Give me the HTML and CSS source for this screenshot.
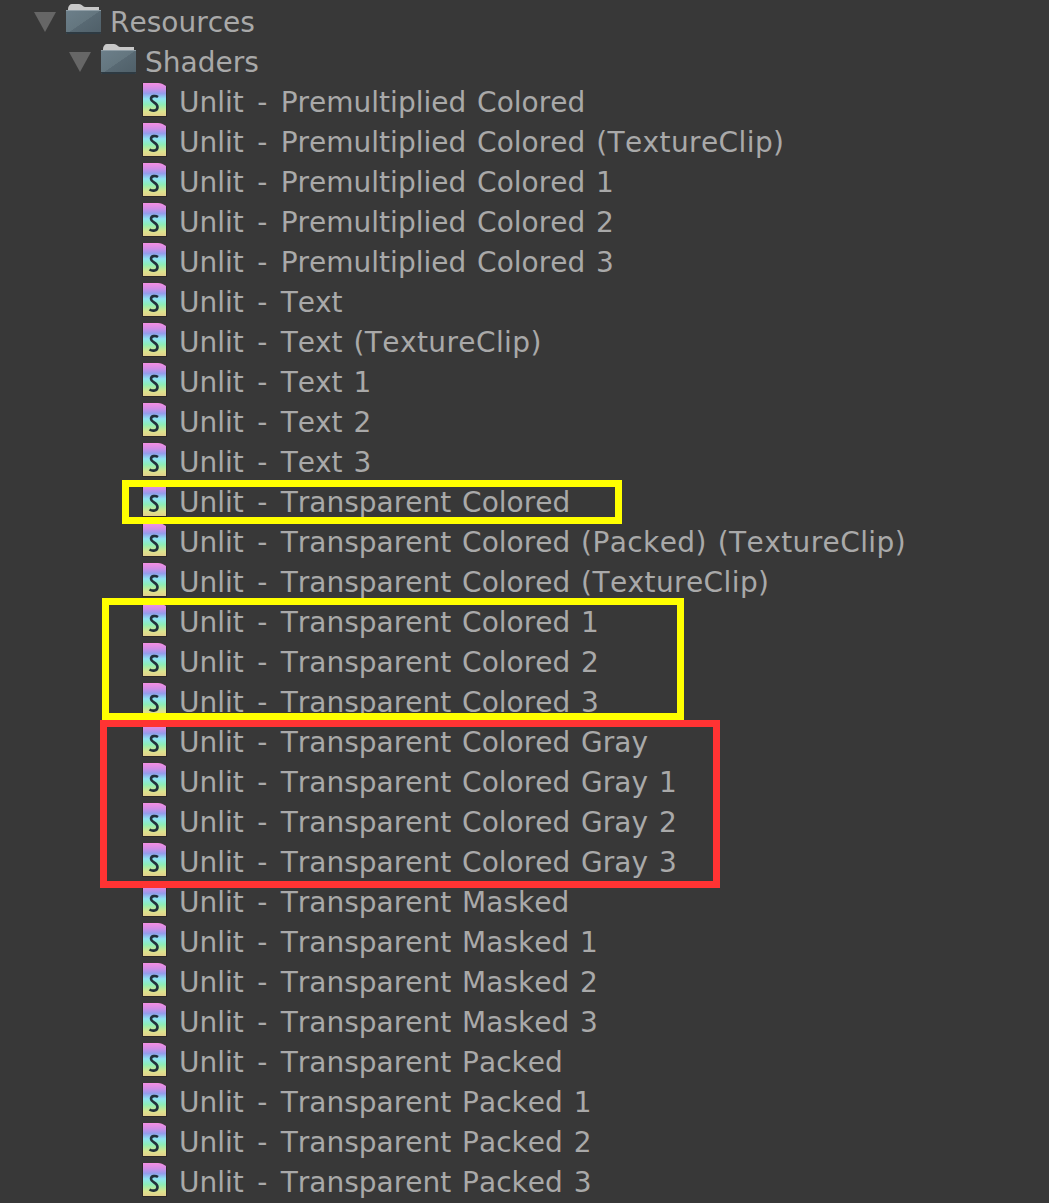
FILE: index.html
```html
<!DOCTYPE html>
<html lang="en">
<head>
  <meta charset="UTF-8" />
  <title>Project tree</title>
  <link rel="stylesheet" href="styles.css">
</head>
<body>
  <svg class="defs" width="0" height="0">
    <defs>
      <linearGradient id="shaderFill" x1="0" y1="0" x2="0" y2="1">
        <stop offset="0" stop-color="#f58fe4"/>
        <stop offset="0.17" stop-color="#d08ee6"/>
        <stop offset="0.32" stop-color="#939eec"/>
        <stop offset="0.48" stop-color="#8ee4f2"/>
        <stop offset="0.66" stop-color="#8eeeb4"/>
        <stop offset="0.86" stop-color="#dce48e"/>
        <stop offset="1" stop-color="#e4d08c"/>
      </linearGradient>
      <linearGradient id="folderFill" x1="0" y1="0" x2="1" y2="1">
        <stop offset="0" stop-color="#6c7f8a"/>
        <stop offset="0.5" stop-color="#64767f"/>
        <stop offset="0.51" stop-color="#586973"/>
        <stop offset="1" stop-color="#4f5f68"/>
      </linearGradient>
      <symbol id="shader" viewBox="0 0 25 35">
        <path d="M0 1 L16 1 C19 1 21 2 24 4 L25 5 L25 35 L0 35 Z" fill="#2c2826"/>
        <path d="M1 1 L16 1 C19 1 21 2 24 4 L24 34 L1 34 Z" fill="url(#shaderFill)"/>
        <path d="M16 15 C13 13 9 14 9 17 C9 20.500 15.500 20.500 15.500 25 C15.500 29 10.500 29.500 7.500 27.500" fill="none" stroke="#22303a" stroke-width="2.600"/>
      </symbol>
      <symbol id="folder" viewBox="0 0 36 30">
        <path d="M2 5 C2 2 4 0 6 0 L13 0 C16 0 17 3 19 3 L33 3 L33 8 L2 8 Z" fill="#c8c8c8"/>
        <path d="M0 6 L35 6 L35 28 C35 29 34 30 33 30 L2 30 C1 30 0 29 0 28 Z" fill="url(#folderFill)"/>
        <path d="M0 6 L35 6 L35 7 L0 7 Z" fill="#8f9da5"/>
        <path d="M0 28 L35 28 L35 29 L34 30 L1 30 L0 29 Z" fill="#2e3a42"/>
      </symbol>
    </defs>
  </svg>

  <main class="tree">
    <div class="row row-root">
      <span class="arrow"></span>
      <svg class="folder"><use href="#folder"/></svg>
      <span class="label">Resources</span>
    </div>
    <div class="row row-sub">
      <span class="arrow"></span>
      <svg class="folder"><use href="#folder"/></svg>
      <span class="label">Shaders</span>
    </div>
    <div class="row row-file"><svg class="shader"><use href="#shader"/></svg><span class="label">Unlit <span class="dash">-</span> Premultiplied Colored</span></div>
    <div class="row row-file"><svg class="shader"><use href="#shader"/></svg><span class="label">Unlit <span class="dash">-</span> Premultiplied Colored <span class="tag">(TextureClip)</span></span></div>
    <div class="row row-file"><svg class="shader"><use href="#shader"/></svg><span class="label">Unlit <span class="dash">-</span> Premultiplied Colored 1</span></div>
    <div class="row row-file"><svg class="shader"><use href="#shader"/></svg><span class="label">Unlit <span class="dash">-</span> Premultiplied Colored 2</span></div>
    <div class="row row-file"><svg class="shader"><use href="#shader"/></svg><span class="label">Unlit <span class="dash">-</span> Premultiplied Colored 3</span></div>
    <div class="row row-file"><svg class="shader"><use href="#shader"/></svg><span class="label">Unlit <span class="dash">-</span> Text</span></div>
    <div class="row row-file"><svg class="shader"><use href="#shader"/></svg><span class="label">Unlit <span class="dash">-</span> Text <span class="tag">(TextureClip)</span></span></div>
    <div class="row row-file"><svg class="shader"><use href="#shader"/></svg><span class="label">Unlit <span class="dash">-</span> Text 1</span></div>
    <div class="row row-file"><svg class="shader"><use href="#shader"/></svg><span class="label">Unlit <span class="dash">-</span> Text 2</span></div>
    <div class="row row-file"><svg class="shader"><use href="#shader"/></svg><span class="label">Unlit <span class="dash">-</span> Text 3</span></div>
    <div class="row row-file"><svg class="shader"><use href="#shader"/></svg><span class="label">Unlit <span class="dash">-</span> Transparent Colored</span></div>
    <div class="row row-file"><svg class="shader"><use href="#shader"/></svg><span class="label">Unlit <span class="dash">-</span> Transparent Colored <span class="tag">(Packed)</span> <span class="tag">(TextureClip)</span></span></div>
    <div class="row row-file"><svg class="shader"><use href="#shader"/></svg><span class="label">Unlit <span class="dash">-</span> Transparent Colored <span class="tag">(TextureClip)</span></span></div>
    <div class="row row-file"><svg class="shader"><use href="#shader"/></svg><span class="label">Unlit <span class="dash">-</span> Transparent Colored 1</span></div>
    <div class="row row-file"><svg class="shader"><use href="#shader"/></svg><span class="label">Unlit <span class="dash">-</span> Transparent Colored 2</span></div>
    <div class="row row-file"><svg class="shader"><use href="#shader"/></svg><span class="label">Unlit <span class="dash">-</span> Transparent Colored 3</span></div>
    <div class="row row-file"><svg class="shader"><use href="#shader"/></svg><span class="label">Unlit <span class="dash">-</span> Transparent Colored Gray</span></div>
    <div class="row row-file"><svg class="shader"><use href="#shader"/></svg><span class="label">Unlit <span class="dash">-</span> Transparent Colored Gray 1</span></div>
    <div class="row row-file"><svg class="shader"><use href="#shader"/></svg><span class="label">Unlit <span class="dash">-</span> Transparent Colored Gray 2</span></div>
    <div class="row row-file"><svg class="shader"><use href="#shader"/></svg><span class="label">Unlit <span class="dash">-</span> Transparent Colored Gray 3</span></div>
    <div class="row row-file"><svg class="shader"><use href="#shader"/></svg><span class="label">Unlit <span class="dash">-</span> Transparent Masked</span></div>
    <div class="row row-file"><svg class="shader"><use href="#shader"/></svg><span class="label">Unlit <span class="dash">-</span> Transparent Masked 1</span></div>
    <div class="row row-file"><svg class="shader"><use href="#shader"/></svg><span class="label">Unlit <span class="dash">-</span> Transparent Masked 2</span></div>
    <div class="row row-file"><svg class="shader"><use href="#shader"/></svg><span class="label">Unlit <span class="dash">-</span> Transparent Masked 3</span></div>
    <div class="row row-file"><svg class="shader"><use href="#shader"/></svg><span class="label">Unlit <span class="dash">-</span> Transparent Packed</span></div>
    <div class="row row-file"><svg class="shader"><use href="#shader"/></svg><span class="label">Unlit <span class="dash">-</span> Transparent Packed 1</span></div>
    <div class="row row-file"><svg class="shader"><use href="#shader"/></svg><span class="label">Unlit <span class="dash">-</span> Transparent Packed 2</span></div>
    <div class="row row-file"><svg class="shader"><use href="#shader"/></svg><span class="label">Unlit <span class="dash">-</span> Transparent Packed 3</span></div>

    <!-- hand drawn marks on top of the list -->
    <div class="mark mark-yellow mark-one"></div>
    <div class="mark mark-yellow mark-two"></div>
    <div class="mark mark-red mark-three"></div>
  </main>
</body>
</html>
```

FILE: styles.css
```css
html, body {
  margin: 0;
  height: 100%;
  overflow: hidden;
  background: #383838;
}

.defs {
  display: block;
  height: 0;
}

.tree {
  position: relative;
  padding-top: 2px;
  font-family: "DejaVu Sans", sans-serif;
  font-size: 28px;
  font-kerning: none;
  word-spacing: 2px;
  color: #a9a9a9;
}

.row {
  display: flex;
  align-items: center;
  height: 40px;
  white-space: nowrap;
}

.row-root {
  padding-left: 34px;
}

.row-sub {
  padding-left: 69px;
}

.row-file {
  padding-left: 142px;
}

.dash {
  margin: 0 2.5px;
}

.tag {
  letter-spacing: 0.4px;
}

.arrow {
  width: 0;
  height: 0;
  margin-right: 10px;
  border-left: 11px solid transparent;
  border-right: 11px solid transparent;
  border-top: 20px solid #666;
}

.folder {
  width: 36px;
  height: 30px;
  margin-right: 8px;
  margin-bottom: 6px;
}

.shader {
  width: 25px;
  height: 35px;
  margin-right: 12px;
  margin-bottom: 5px;
}

.mark {
  position: absolute;
  box-sizing: border-box;
  border-width: 7px;
  border-style: solid;
}

.mark-yellow {
  border-color: #ffff00;
}

.mark-red {
  border-color: #ff3333;
}

.mark-one {
  left: 122px;
  top: 480px;
  width: 500px;
  height: 44px;
}

.mark-two {
  left: 102px;
  top: 598px;
  width: 582px;
  height: 122px;
}

.mark-three {
  left: 100px;
  top: 720px;
  width: 620px;
  height: 168px;
}
```
